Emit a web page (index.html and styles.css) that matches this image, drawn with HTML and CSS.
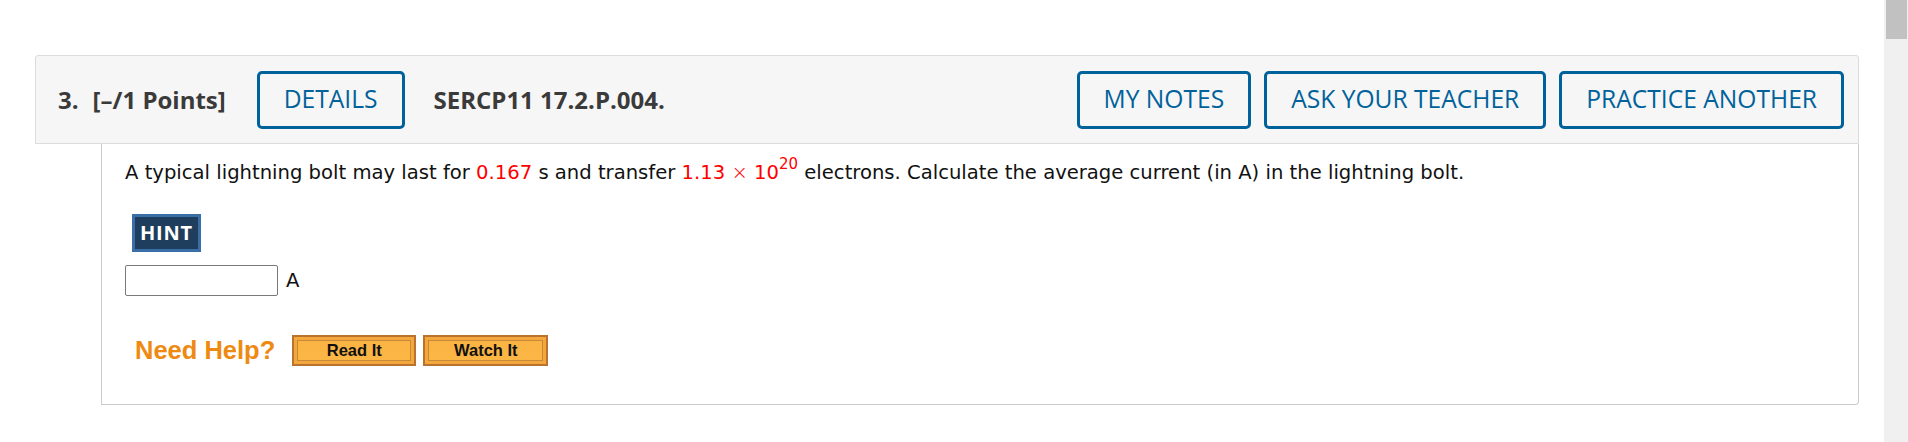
FILE: index.html
```html
<!DOCTYPE html>
<html>
<head>
<meta charset="utf-8">
<link rel="stylesheet" href="styles.css">
</head>
<body>
<div class="page">
  <div class="question">
    <div class="qhead">
      <span class="qnum">3.</span>
      <span class="qpoints">[–/1 Points]</span>
      <button class="obtn">DETAILS</button>
      <span class="qid">SERCP11 17.2.P.004.</span>
      <span class="spacer"></span>
      <div class="actions">
        <button class="obtn">MY NOTES</button>
        <button class="obtn">ASK YOUR TEACHER</button>
        <button class="obtn">PRACTICE ANOTHER</button>
      </div>
    </div>
    <div class="qbody">
      <p class="qtext">A typical lightning bolt may last for <span class="red">0.167</span> s and transfer <span class="red">1.13 <span class="times">×</span> 10<sup>20</sup></span> electrons. Calculate the average current (in A) in the lightning bolt.</p>
      <div class="hintrow"><button class="hint">HINT</button></div>
      <div class="answer">
        <input class="ans" type="text">
        <span class="unit">A</span>
      </div>
      <div class="help">
        <span class="helplabel">Need Help?</span>
        <button class="helpbtn">Read It</button>
        <button class="helpbtn">Watch It</button>
      </div>
    </div>
  </div>
</div>
<div class="scrollbar"><div class="thumb"></div></div>
</body>
</html>
```
FILE: styles.css
```css
html, body {
  margin: 0;
  padding: 0;
  background: #ffffff;
}
body {
  display: flex;
  height: 442px;
  overflow: hidden;
  font-family: "DejaVu Sans", Verdana, sans-serif;
}
.page {
  flex: 1;
  padding: 55px 25px 0 35px;
  min-width: 0;
}
.scrollbar {
  width: 24px;
  height: 442px;
  background: #f0f0f0;
  flex: none;
}
.thumb {
  margin-left: 2px;
  width: 21px;
  height: 39px;
  background: #c1c1c1;
}
.qhead {
  display: flex;
  align-items: center;
  height: 87px;
  background: #f6f6f6;
  border: 1px solid #dcdcdc;
  border-radius: 3px 3px 0 0;
  padding: 0 14px 0 22px;
  font-family: "Open Sans", sans-serif;
  font-size: 24px;
  color: #3a3a3a;
}
.qnum {
  font-weight: 700;
  margin-right: 14px;
}
.qpoints {
  font-weight: 700;
  margin-right: 31px;
}
.qid {
  font-weight: 700;
  margin-left: 29px;
}
.spacer {
  flex: 1;
}
.actions {
  display: flex;
  gap: 13px;
}
.obtn {
  height: 58px;
  border: 3px solid #00629b;
  border-radius: 5px;
  background: transparent;
  color: #00629b;
  font-family: "Open Sans", sans-serif;
  font-size: 24.6px;
  padding: 0 24px;
  margin: 0;
  line-height: 1;
  cursor: pointer;
}
.qbody {
  margin-left: 66px;
  border: 1px solid #cccccc;
  border-top: none;
  border-radius: 0 0 4px 0;
  padding: 15px 24px 38px 23px;
  color: #111111;
  font-size: 19.6px;
}
.qtext {
  margin: 0;
  line-height: 28px;
}
.red {
  color: #ff0000;
}
.times {
  font-weight: 300;
}
sup {
  font-size: 15px;
  vertical-align: 10px;
  line-height: 0;
}
.hintrow {
  margin-top: 27px;
  padding-left: 7px;
}
.hint {
  height: 38px;
  width: 69px;
  padding: 0;
  margin: 0;
  border: 3px solid #3a6ea6;
  background: #1f3d5d;
  color: #ffffff;
  font-family: "Open Sans", sans-serif;
  font-weight: 700;
  font-size: 20px;
  letter-spacing: 0.8px;
  line-height: 1;
  text-align: center;
}
.answer {
  display: flex;
  align-items: center;
  gap: 8px;
  margin-top: 13px;
}
.ans {
  width: 153px;
  height: 31px;
  box-sizing: border-box;
  border: 1px solid #7a7a7a;
  border-radius: 2px;
  margin: 0;
  padding: 0;
}
.unit {
  font-size: 19.6px;
}
.help {
  display: flex;
  align-items: center;
  margin-top: 39px;
  padding-left: 10px;
}
.helplabel {
  font-family: "Liberation Sans", Arial, sans-serif;
  font-weight: 700;
  font-size: 25.5px;
  color: #ee8a12;
  margin-right: 17px;
}
.helpbtn {
  width: 124px;
  height: 31px;
  margin: 0 7px 0 0;
  padding: 0;
  border: 2px solid #b8742e;
  background: linear-gradient(#fde2b0 0, #fbb444 3px, #fbb644 100%);
  box-shadow: inset 0 0 0 3px #f6a73c, inset 0 0 0 4px #c48a3c;
  font-family: "Liberation Sans", Arial, sans-serif;
  font-weight: 700;
  font-size: 16.5px;
  color: #111111;
  line-height: 1;
}
.helpbtn + .helpbtn {
  width: 125px;
}
```
